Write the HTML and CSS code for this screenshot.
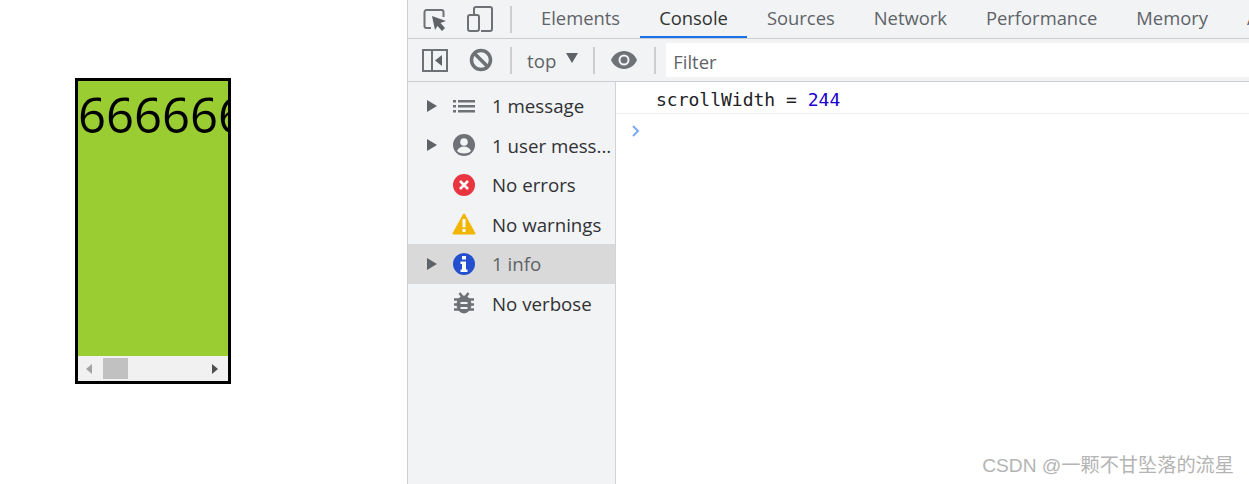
FILE: index.html
```html
<!DOCTYPE html>
<html>
<head>
    <title>scrollWidth</title>
    <link rel="stylesheet" href="styles.css">
</head>
<body>

<div class="page">
    <div class="box">
        <div class="box-content">666666666</div>
        <div class="hbar">
            <span class="hbar-left"></span>
            <span class="hbar-thumb"></span>
            <span class="hbar-right"></span>
        </div>
    </div>
</div>

<div class="devtools">
    <div class="tabbar">
        <svg class="tool-icon inspect" width="24" height="24" viewBox="0 0 24 24">
            <path d="M8 20H3.500a2 2 0 0 1-2-2V4a2 2 0 0 1 2-2h15a2 2 0 0 1 2 2v5" fill="none" stroke="#6e7175" stroke-width="2"/>
            <path d="M9 8l14 5-5.500 2 4.500 5-3 3-4.500-5L12 22z" fill="#5f6368"/>
        </svg>
        <svg class="tool-icon device" width="26" height="26" viewBox="0 0 26 26">
            <path d="M7 9V3a2 2 0 0 1 2-2h14a2 2 0 0 1 2 2v20a2 2 0 0 1-2 2h-9" fill="none" stroke="#6e7175" stroke-width="2"/>
            <rect x="1" y="9" width="11" height="16" rx="2" fill="none" stroke="#6e7175" stroke-width="2"/>
        </svg>
        <span class="sep tab-sep"></span>
        <span class="tab">Elements</span>
        <span class="tab active">Console</span>
        <span class="tab">Sources</span>
        <span class="tab">Network</span>
        <span class="tab">Performance</span>
        <span class="tab">Memory</span>
        <span class="tab">Application</span>
    </div>

    <div class="filterbar">
        <svg class="dock" width="26" height="23" viewBox="0 0 26 23">
            <path d="M1 1h24v21H1zM10 1v21" fill="none" stroke="#6e7175" stroke-width="2"/>
            <path d="M20 6v11l-7-5.500z" fill="#5f6368"/>
        </svg>
        <svg class="ban" width="24" height="24" viewBox="0 0 24 24">
            <circle cx="12" cy="12" r="9.500" fill="none" stroke="#6e7175" stroke-width="3.500"/>
            <path d="M5 5l14 14" stroke="#6e7175" stroke-width="3.500"/>
        </svg>
        <span class="sep"></span>
        <span class="context">top</span>
        <span class="context-arrow"></span>
        <span class="sep"></span>
        <svg class="eye" width="26" height="18" viewBox="0 0 26 18">
            <path d="M13 0C7 0 2.500 3.500 0 9c2.500 5.500 7 9 13 9s10.500-3.500 13-9c-2.500-5.500-7-9-13-9z" fill="#6e7175"/>
            <circle cx="13" cy="9" r="5.500" fill="#f1f3f4"/>
            <circle cx="13" cy="9" r="3.500" fill="#6e7175"/>
        </svg>
        <span class="sep"></span>
        <div class="filter">Filter</div>
    </div>

    <div class="panes">
        <div class="sidebar">
            <div class="row">
                <span class="arrow"></span>
                <svg width="24" height="24" viewBox="0 0 24 24">
                    <path d="M1 6h3v2.500H1zM6 6h17v2.500H6zM1 11h3v2.500H1zM6 11h17v2.500H6zM1 16h3v2.500H1zM6 16h17v2.500H6z" fill="#6e7175"/>
                </svg>
                <span class="label">1 message</span>
            </div>
            <div class="row">
                <span class="arrow"></span>
                <svg width="24" height="24" viewBox="0 0 24 24">
                    <circle cx="12" cy="12" r="11" fill="#6e7175"/>
                    <circle cx="12" cy="9" r="3.800" fill="#f1f3f4"/>
                    <path d="M5 18c1-3 4-4.500 7-4.500s6 1.500 7 4.500c-2 1.800-4.500 2.500-7 2.500s-5-.7-7-2.500z" fill="#f1f3f4"/>
                </svg>
                <span class="label">1 user mess...</span>
            </div>
            <div class="row">
                <span class="arrow none"></span>
                <svg width="24" height="24" viewBox="0 0 24 24">
                    <circle cx="12" cy="12" r="11" fill="#e9353f"/>
                    <path d="M8 8l8 8M16 8l-8 8" stroke="#fff" stroke-width="2.500"/>
                </svg>
                <span class="label">No errors</span>
            </div>
            <div class="row">
                <span class="arrow none"></span>
                <svg width="24" height="24" viewBox="0 0 24 24">
                    <path d="M12 2.500L22.500 21.500H1.500z" fill="#f2b500" stroke="#f2b500" stroke-width="2" stroke-linejoin="round"/>
                    <path d="M10.500 7h3v8.500h-3zM10.500 17h3v3h-3z" fill="#fff"/>
                </svg>
                <span class="label">No warnings</span>
            </div>
            <div class="row selected">
                <span class="arrow"></span>
                <svg width="24" height="24" viewBox="0 0 24 24">
                    <circle cx="12" cy="12" r="11" fill="#2450d0"/>
                    <path d="M10 4h4v3.500h-4zM8.500 9.500H14v8h1.500v2.500h-7v-2.500H10v-5.500H8.500z" fill="#fff"/>
                </svg>
                <span class="label">1 info</span>
            </div>
            <div class="row">
                <span class="arrow none"></span>
                <svg width="24" height="24" viewBox="0 0 24 24">
                    <path d="M2 8.500h20M2 13.500h20M2 18.500h20M7.500 2l3 4M16.500 2l-3 4" stroke="#6e7175" stroke-width="2.500" fill="none"/>
                    <ellipse cx="12" cy="13.500" rx="7.500" ry="9" fill="#6e7175"/>
                    <path d="M8.500 11h7v2h-7zM8.500 16h7v2h-7z" fill="#f1f3f4"/>
                </svg>
                <span class="label">No verbose</span>
            </div>
        </div>
        <div class="console">
            <div class="console-line">scrollWidth = <span class="num">244</span></div>
            <svg class="prompt" width="10" height="14" viewBox="0 0 10 14">
                <path d="M2 2l5 5-5 5" fill="none" stroke="#7fa8f0" stroke-width="2"/>
            </svg>
        </div>
    </div>
</div>

<div class="watermark">CSDN @一颗不甘坠落的流星</div>

</body>
</html>
```

FILE: styles.css
```css
html, body {
    height: 100%;
}

body {
    margin: 0;
    display: flex;
    overflow: hidden;
    background: #fff;
    font-family: 'Open Sans', 'Noto Sans', sans-serif;
}

/* left side, the page being inspected */
.page {
    width: 407px;
    flex: none;
    padding: 78px 0 0 75px;
    box-sizing: border-box;
}

.box {
    width: 156px;
    height: 306px;
    box-sizing: border-box;
    border: 3px solid #000;
    display: flex;
    flex-direction: column;
}

.box-content {
    flex: 1;
    background: #9acd32;
    overflow: hidden;
    font-size: 49px;
    line-height: 67px;
    color: #000;
    white-space: nowrap;
}

.hbar {
    height: 25px;
    background: #f1f1f1;
    display: flex;
    align-items: center;
}

.hbar-left {
    margin-left: 8px;
    border-style: solid;
    border-width: 5.500px 6px 5.500px 0;
    border-color: transparent #a3a3a3 transparent transparent;
}

.hbar-thumb {
    width: 25px;
    height: 21px;
    margin-left: 11px;
    background: #c1c1c1;
}

.hbar-right {
    margin-left: 84px;
    border-style: solid;
    border-width: 5.500px 0 5.500px 6px;
    border-color: transparent transparent transparent #505050;
}

/* devtools */
.devtools {
    flex: 1;
    min-width: 0;
    border-left: 1px solid #cacdd1;
    display: flex;
    flex-direction: column;
    background: #f1f3f4;
}

.tabbar {
    height: 38px;
    flex: none;
    display: flex;
    align-items: center;
    border-bottom: 1px solid #cacdd1;
    white-space: nowrap;
    overflow: hidden;
}

.tool-icon {
    flex: none;
}

.inspect {
    margin: 2px 0 0 15px;
}

.device {
    margin: 0 0 0 20px;
}

.sep {
    flex: none;
    width: 2px;
    height: 27px;
    background: #cbcdd0;
}

.tab-sep {
    margin: 0 9.500px 0 17px;
}

.tab {
    height: 38px;
    box-sizing: border-box;
    padding: 0 19.500px;
    line-height: 35px;
    font-size: 18.400px;
    color: #5f6368;
    flex: none;
}

.tab.active {
    color: #333;
    border-bottom: 2px solid #1a73e8;
}

.filterbar {
    height: 42px;
    flex: none;
    display: flex;
    align-items: center;
    border-bottom: 1px solid #cacdd1;
}

.dock {
    margin-left: 14px;
    flex: none;
}

.ban {
    margin: 0 17px 0 21px;
    flex: none;
}

.context {
    margin-left: 15px;
    font-size: 18.700px;
    color: #5f6368;
}

.context-arrow {
    margin: 0 15px 4px 10px;
    border-style: solid;
    border-width: 10px 6px 0 6px;
    border-color: #5f6368 transparent transparent transparent;
}

.eye {
    margin: 0 17px 0 16px;
    flex: none;
}

.filter {
    flex: 1;
    height: 34px;
    margin-left: 10px;
    padding-left: 7px;
    background: #fff;
    font-size: 18.400px;
    line-height: 38px;
    color: #5f6368;
}

.panes {
    flex: 1;
    display: flex;
    min-height: 0;
}

.sidebar {
    width: 208px;
    flex: none;
    box-sizing: border-box;
    padding-top: 4.200px;
    border-right: 1px solid #d0d2d5;
}

.row {
    height: 39.500px;
    display: flex;
    align-items: center;
    font-size: 18.700px;
    color: #303135;
    white-space: nowrap;
}

.row svg {
    flex: none;
    margin-left: 15px;
}

.row.selected {
    background: #d9d9d9;
    color: #5f6368;
}

.arrow {
    margin-left: 19px;
    width: 0;
    border-style: solid;
    border-width: 6.500px 0 6.500px 10px;
    border-color: transparent transparent transparent #5f6368;
}

.arrow.none {
    visibility: hidden;
}

.label {
    margin-left: 16px;
}

.console {
    flex: 1;
    background: #fff;
}

.console-line {
    height: 32px;
    box-sizing: border-box;
    padding-left: 40px;
    border-bottom: 1px solid #eeeeee;
    font-family: 'DejaVu Sans Mono', 'Liberation Mono', monospace;
    font-size: 18px;
    line-height: 36px;
    color: #202124;
}

.num {
    color: #1c00cf;
}

.prompt {
    display: block;
    margin: 10px 0 0 15px;
}

/* watermark sits over the console */
.watermark {
    position: absolute;
    right: 15px;
    bottom: 6px;
    font-family: 'Liberation Sans', 'Noto Sans CJK SC', sans-serif;
    font-size: 19.200px;
    color: #b4b4b4;
}
```
